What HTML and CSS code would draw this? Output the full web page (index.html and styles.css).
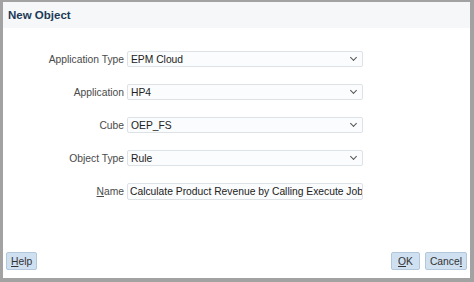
FILE: index.html
```html
<!DOCTYPE html>
<html>
<head>
    <meta charset="UTF-8">
    <title>New Object</title>
    <link rel="stylesheet" href="styles.css">
</head>
<body>
    <div class="dialog">
        <div class="header">
            <span class="title">New Object</span>
        </div>
        <div class="content">
            <div class="form">
                <label class="label">Application Type</label>
                <div class="select"><span>EPM Cloud</span><span class="chev"></span></div>

                <label class="label">Application</label>
                <div class="select"><span>HP4</span><span class="chev"></span></div>

                <label class="label">Cube</label>
                <div class="select"><span>OEP_FS</span><span class="chev"></span></div>

                <label class="label">Object Type</label>
                <div class="select"><span>Rule</span><span class="chev"></span></div>

                <label class="label"><u>N</u>ame</label>
                <div class="input">Calculate Product Revenue by Calling Execute Job</div>
            </div>
        </div>
        <div class="footer">
            <button class="btn"><u>H</u>elp</button>
            <div class="actions">
                <button class="btn ok"><u>O</u>K</button>
                <button class="btn">Cance<u>l</u></button>
            </div>
        </div>
    </div>
</body>
</html>
```

FILE: styles.css
```css
html, body {
    margin: 0;
    padding: 0;
    height: 100%;
}
body {
    font-family: "Liberation Sans", Arial, sans-serif;
    font-size: 10.3px;
    color: #333;
    background-color: #9c9c9c;
}
.dialog {
    box-sizing: border-box;
    height: 282px;
    border-style: solid;
    border-color: #a2a2a2;
    border-width: 2px 4px 4px 3px;
    background-color: #fff;
    display: flex;
    flex-direction: column;
}
.header {
    height: 26px;
    display: flex;
    align-items: center;
    padding-left: 5px;
    background-color: #f6f7f8;
    flex-shrink: 0;
}
.title {
    font-weight: bold;
    font-size: 11.5px;
    color: #1c3a57;
}
.content {
    flex: 1;
    padding-top: 23px;
}
.form {
    display: grid;
    grid-template-columns: 121px 236px;
    column-gap: 3px;
    row-gap: 17px;
    align-items: center;
}
.label {
    text-align: right;
    color: #4a4a4a;
}
.select, .input {
    box-sizing: border-box;
    height: 16px;
    border: 1px solid #dde2e7;
    border-radius: 2px;
    background-color: #fbfcfd;
    padding: 0 4px 0 3px;
    display: flex;
    align-items: center;
    justify-content: space-between;
    color: #222;
}
.chev {
    width: 4px;
    height: 4px;
    border-right: 1.5px solid #555;
    border-bottom: 1.5px solid #555;
    transform: rotate(45deg);
    margin: 0 2px 3px 0;
}
.input {
    height: 17px;
    padding-left: 2px;
    white-space: nowrap;
    overflow: hidden;
}
.footer {
    display: flex;
    justify-content: space-between;
    align-items: center;
    padding: 0 3px 8px 3px;
}
.actions {
    display: flex;
    gap: 5px;
}
.btn {
    font-family: inherit;
    font-size: 10.3px;
    color: #333;
    height: 18px;
    padding: 0 4px;
    border: 1px solid #b3c7dc;
    border-radius: 2px;
    background-color: #cfe0f1;
}
.ok {
    padding: 0 6px;
}
```
